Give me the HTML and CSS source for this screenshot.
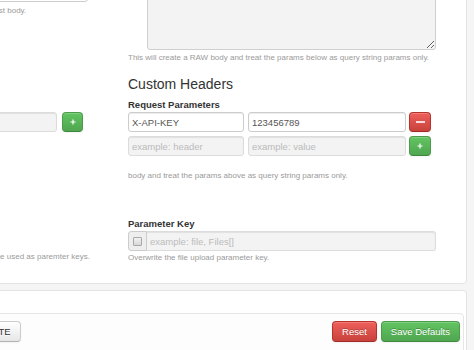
FILE: index.html
```html
<!DOCTYPE html>
<html lang="en">
<head>
<meta charset="utf-8">
<title>Settings</title>
<link rel="stylesheet" href="styles.css">
</head>
<body>
<div class="page">
  <div class="panel">
    <div class="col col-left">
      <input class="input top-input" type="text">
      <p class="help help-a">When enabled, the parameters will be sent as the full request body.</p>
      <div class="row-add">
        <input class="input input-muted grow" type="text">
        <button class="btn btn-success btn-icon" type="button" aria-label="Add">
          <svg width="6" height="6" viewBox="0 0 6 6"><path d="M3 0.5v5M0.5 3h5" stroke="#fff" stroke-width="1.2"/></svg>
        </button>
      </div>
      <p class="help help-b">Field names of the uploaded files in your request body will be used as paremter keys.</p>
    </div>
    <div class="col col-right">
      <textarea class="textarea"></textarea>
      <p class="help help-c">This will create a RAW body and treat the params below as query string params only.</p>
      <h3 class="heading">Custom Headers</h3>
      <label class="label label-params">Request Parameters</label>
      <div class="kv-list">
        <div class="kv-row">
          <input class="input kv-key" type="text" value="X-API-KEY">
          <input class="input kv-val" type="text" value="123456789">
          <button class="btn btn-danger btn-icon btn-kv" type="button" aria-label="Remove">
            <svg width="9" height="4" viewBox="0 0 9 4"><rect x="0" y="1" width="9" height="2" fill="#f4dcdc"/></svg>
          </button>
        </div>
        <div class="kv-row">
          <input class="input input-muted kv-key" type="text" placeholder="example: header">
          <input class="input input-muted kv-val" type="text" placeholder="example: value">
          <button class="btn btn-success btn-icon btn-kv" type="button" aria-label="Add">
            <svg width="6" height="6" viewBox="0 0 6 6"><path d="M3 0.5v5M0.5 3h5" stroke="#fff" stroke-width="1.2"/></svg>
          </button>
        </div>
      </div>
      <p class="help help-d">body and treat the params above as query string params only.</p>
      <label class="label label-key">Parameter Key</label>
      <div class="prepend">
        <span class="addon"><span class="check"></span></span>
        <input class="input input-muted prepend-input" type="text" placeholder="example: file, Files[]">
      </div>
      <p class="help help-e">Overwrite the file upload parameter key.</p>
    </div>
  </div>
  <div class="footer">
    <div class="actions">
      <div class="btn-group">
        <button class="btn" type="button">EXPORT</button>
        <button class="btn" type="button">IMPORT</button>
        <button class="btn" type="button">DELETE</button>
      </div>
      <div class="btn-group">
        <button class="btn btn-danger" type="button">Reset</button>
        <button class="btn btn-success" type="button">Save Defaults</button>
      </div>
    </div>
  </div>
</div>
</body>
</html>
```

FILE: styles.css
```css
html, body {
  margin: 0;
  padding: 0;
}
body {
  width: 474px;
  height: 350px;
  overflow: hidden;
  background: #f5f5f5;
  font-family: "Liberation Sans", Arial, sans-serif;
  color: #333;
}
.page {
  width: 697px;
  margin: -40px 0 0 -230px;
}
.panel {
  display: flex;
  gap: 40px;
  background: #fff;
  border: 1px solid #e3e3e3;
  border-radius: 4px;
  padding: 9px 30px 20px 17px;
}
.col-left {
  width: 300px;
  flex: none;
}
.col-right {
  width: 308px;
  flex: none;
}

.input {
  display: block;
  box-sizing: border-box;
  height: 20px;
  margin: 0;
  padding: 0 3px;
  border: 1px solid #ccc;
  border-radius: 3px;
  background: #fff;
  box-shadow: inset 0 1px 1px rgba(0, 0, 0, 0.075);
  font: 9.5px "Liberation Sans", Arial, sans-serif;
  color: #555;
  outline: none;
}
.input::placeholder {
  color: #bbbbbb;
}
.input-muted {
  background: #f3f3f3;
  border-color: #dcdcdc;
}
.top-input {
  width: 100%;
  margin-top: 12px;
}

.help {
  margin: 0;
  font-size: 8px;
  line-height: 11px;
  color: #9a9a9a;
  white-space: nowrap;
}
.help-a { margin-top: 3px; }
.help-b { margin-top: 119px; }
.help-c { margin-top: 2px; }
.help-d { margin-top: 14px; }
.help-e { margin-top: 1px; }

.row-add {
  display: flex;
  gap: 5px;
  margin-top: 96px;
  padding-right: 5px;
}
.grow {
  flex: 1;
  min-width: 0;
}

.textarea {
  display: block;
  box-sizing: border-box;
  width: 289px;
  height: 80px;
  margin: 0 0 0 19px;
  border: 1px solid #cfcfcf;
  border-radius: 3px;
  background: #f3f3f3;
  box-shadow: inset 0 1px 1px rgba(0, 0, 0, 0.05);
  resize: vertical;
  outline: none;
}

.heading {
  margin: 12px 0 0;
  font-size: 14px;
  line-height: 18px;
  font-weight: normal;
  color: #333;
}
.label {
  display: block;
  font-size: 9.5px;
  line-height: 13px;
  font-weight: bold;
  color: #333;
}
.label-params { margin-top: 5px; }
.label-key { margin-top: 36px; }

.kv-list {
  display: flex;
  flex-direction: column;
  gap: 4px;
  margin-top: 1px;
}
.kv-row {
  display: flex;
  align-items: center;
}
.kv-key {
  width: 116px;
}
.kv-val {
  width: 158px;
  margin-left: 4px;
}

.prepend {
  display: flex;
  margin-top: 1px;
  height: 20px;
}
.addon {
  box-sizing: border-box;
  width: 19px;
  height: 20px;
  display: flex;
  align-items: center;
  justify-content: center;
  background: #eee;
  border: 1px solid #ccc;
  border-radius: 3px 0 0 3px;
}
.check {
  box-sizing: border-box;
  width: 9px;
  height: 9px;
  border: 1px solid #a8a8a8;
  border-radius: 1px;
  background: linear-gradient(#f2f2f2, #d8d8d8);
}
.prepend-input {
  width: 289px;
  border-left: none;
  border-radius: 0 3px 3px 0;
}

.btn {
  box-sizing: border-box;
  height: 21px;
  margin: 0;
  padding: 0 9px;
  border: 1px solid #ccc;
  border-bottom-color: #b3b3b3;
  border-radius: 4px;
  background: linear-gradient(#ffffff, #e6e6e6);
  box-shadow: inset 0 1px 0 rgba(255, 255, 255, 0.2), 0 1px 2px rgba(0, 0, 0, 0.05);
  font: 9.5px "Liberation Sans", Arial, sans-serif;
  line-height: 19px;
  color: #333;
  text-shadow: 0 1px 1px rgba(255, 255, 255, 0.75);
  white-space: nowrap;
}
.btn-danger {
  background: linear-gradient(#ee5f5b, #c9423c);
  border-color: #b5322c #b5322c #9c2a25;
  color: #fff;
  text-shadow: 0 -1px 0 rgba(0, 0, 0, 0.25);
}
.btn-success {
  background: linear-gradient(#62c462, #4fa64f);
  border-color: #4b9b4b #4b9b4b #3f873f;
  color: #fff;
  text-shadow: 0 -1px 0 rgba(0, 0, 0, 0.25);
}
.btn-icon {
  width: 21px;
  height: 20px;
  padding: 0;
  display: flex;
  align-items: center;
  justify-content: center;
  flex: none;
}
.btn-kv {
  width: 22px;
  margin-left: 3px;
}

.footer {
  margin-top: 6px;
  background: #fff;
  border: 1px solid #e3e3e3;
  border-radius: 4px;
  padding: 22px 2px 0 0;
}
.actions {
  display: flex;
  justify-content: space-between;
  background: #fdfdfd;
  border: 1px solid #e6e6e6;
  border-radius: 4px;
  padding: 7px 3px 20px 68px;
}
.btn-group {
  display: flex;
  gap: 4px;
}
```
